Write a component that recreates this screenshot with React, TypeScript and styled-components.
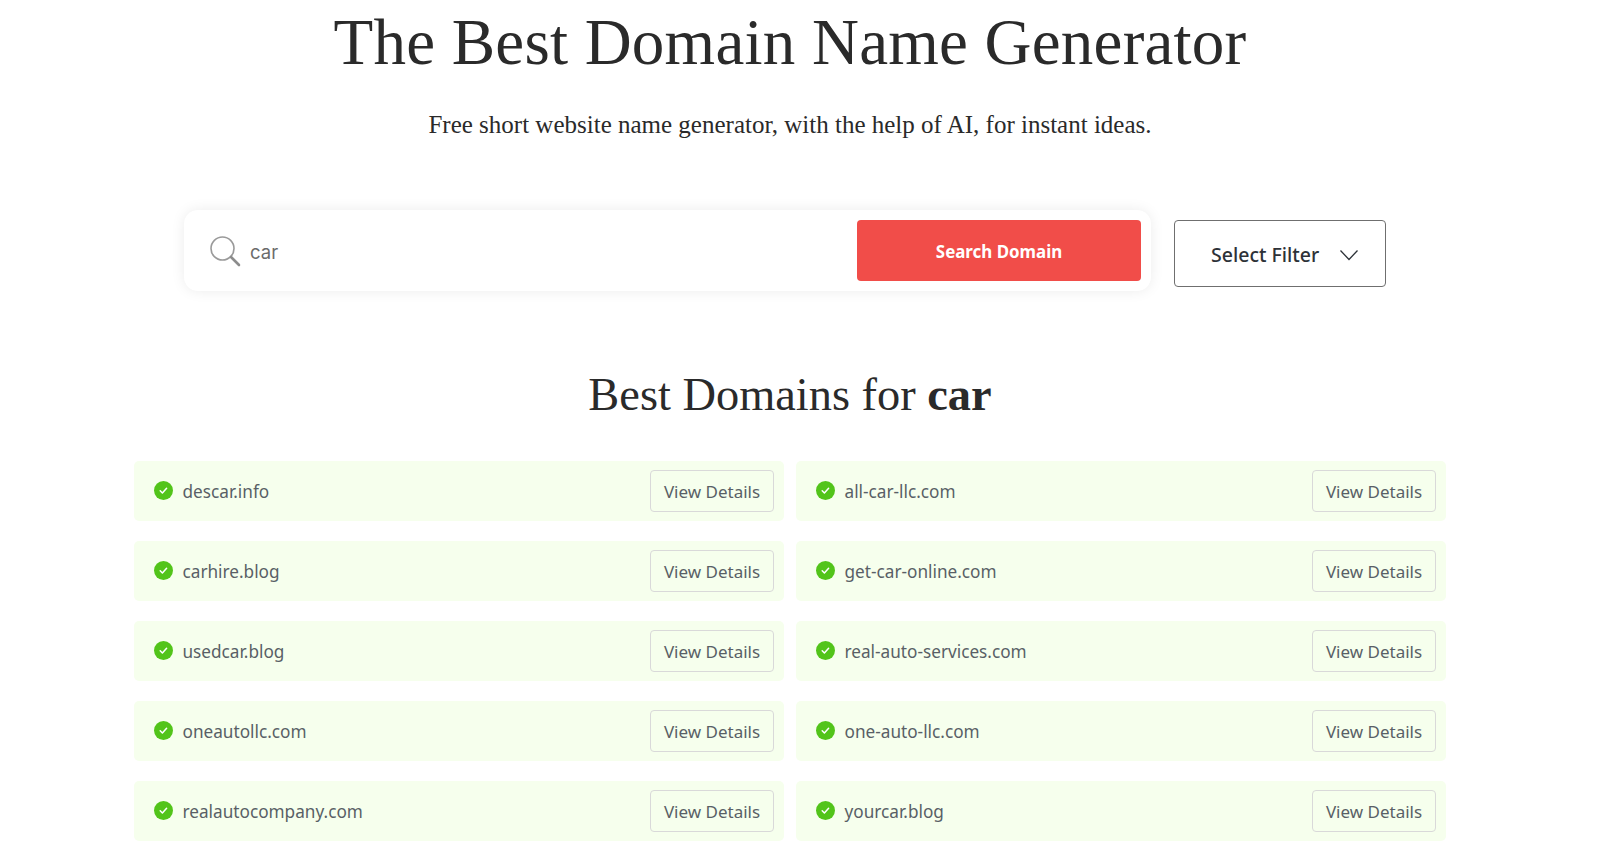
import styled, { createGlobalStyle } from "styled-components";

const domains = [
  "descar.info",
  "all-car-llc.com",
  "carhire.blog",
  "get-car-online.com",
  "usedcar.blog",
  "real-auto-services.com",
  "oneautollc.com",
  "one-auto-llc.com",
  "realautocompany.com",
  "yourcar.blog",
];

const GlobalStyle = createGlobalStyle`
  html, body {
    margin: 0;
    padding: 0;
    background: #fff;
    overflow: hidden;
  }
  * {
    box-sizing: border-box;
  }
`;

const Page = styled.div`
  width: 1580px;
  height: 849px;
  overflow: hidden;
  display: flex;
  flex-direction: column;
  align-items: center;
  padding-top: 5px;
`;

const Title = styled.h1`
  margin: 0;
  font-family: "Liberation Serif", serif;
  font-weight: 400;
  font-size: 65px;
  line-height: 74px;
  letter-spacing: 0.23px;
  color: #2a2a2a;
`;

const Subtitle = styled.p`
  margin: 29px 0 0;
  font-family: "Liberation Serif", serif;
  font-size: 25px;
  line-height: 34px;
  color: #2a2a2a;
`;

const SearchRow = styled.div`
  margin-top: 68px;
  width: 1212px;
  padding-right: 10px;
  display: flex;
  align-items: center;
  gap: 23px;
`;

const SearchCard = styled.div`
  width: 967px;
  height: 81px;
  padding: 10px;
  background: #fff;
  border-radius: 14px;
  box-shadow: 0 0 14px rgba(0, 0, 0, 0.08);
  display: flex;
  align-items: center;
`;

const SearchIcon = styled.svg`
  width: 32px;
  height: 32px;
  margin-left: 15px;
  flex-shrink: 0;
`;

const SearchValue = styled.span`
  margin-left: 9px;
  padding-top: 3px;
  flex: 1;
  font-family: Inter, sans-serif;
  font-size: 18.5px;
  color: #6b6b6b;
`;

const SearchButton = styled.button`
  width: 284px;
  height: 61px;
  padding: 2px 0 0;
  border: none;
  border-radius: 4px;
  background: #f14d49;
  color: #fff;
  font-family: "Noto Sans", sans-serif;
  font-weight: 700;
  font-size: 16.9px;
`;

const FilterButton = styled.button`
  width: 212px;
  height: 67px;
  margin-top: 6px;
  padding: 2px 26px 0 36px;
  display: flex;
  align-items: center;
  justify-content: space-between;
  background: #fff;
  border: 1px solid #6f6f6f;
  border-radius: 4px;
  color: #2d3238;
  font-family: "Noto Sans", sans-serif;
  font-weight: 500;
  font-size: 19.5px;
`;

const FilterChevron = styled.svg`
  width: 20px;
  height: 12px;
  flex-shrink: 0;
`;

const ResultsHeading = styled.h2`
  margin: 76px 0 0;
  font-family: "Liberation Serif", serif;
  font-weight: 400;
  font-size: 46.4px;
  line-height: 56px;
  color: #2a2a2a;

  b {
    font-weight: 700;
  }
`;

const ResultGrid = styled.div`
  margin-top: 38px;
  width: 1312px;
  display: grid;
  grid-template-columns: 650px 650px;
  column-gap: 12px;
  row-gap: 20px;
`;

const ResultRow = styled.div`
  height: 60px;
  padding: 0 10px 0 20px;
  display: flex;
  align-items: center;
  background: #f6ffed;
  border-radius: 5px;
`;

const CheckBadge = styled.span`
  width: 19px;
  height: 19px;
  margin-bottom: 2px;
  border-radius: 50%;
  background: #52c41a;
  display: flex;
  align-items: center;
  justify-content: center;
  flex-shrink: 0;
`;

const DomainName = styled.span`
  margin-left: 9.5px;
  flex: 1;
  font-family: "Noto Sans", sans-serif;
  font-size: 17.2px;
  color: #595f66;
`;

const DetailsButton = styled.button`
  width: 124px;
  height: 42px;
  background: transparent;
  border: 1px solid #d9d9d9;
  border-radius: 4px;
  font-family: "Noto Sans", sans-serif;
  font-size: 17px;
  color: #595f66;
`;

export default function App() {
  return (
    <Page>
      <GlobalStyle />
      <Title>The Best Domain Name Generator</Title>
      <Subtitle>
        Free short website name generator, with the help of AI, for instant
        ideas.
      </Subtitle>
      <SearchRow>
        <SearchCard>
          <SearchIcon viewBox="0 0 32 32" fill="none">
            <circle cx="13.5" cy="13.5" r="11.5" stroke="#9a9a9a" strokeWidth="1.6" />
            <path d="M22 22l8 8" stroke="#8c8c8c" strokeWidth="2.6" strokeLinecap="round" />
          </SearchIcon>
          <SearchValue>car</SearchValue>
          <SearchButton>Search Domain</SearchButton>
        </SearchCard>
        <FilterButton>
          Select Filter
          <FilterChevron viewBox="0 0 20 12" fill="none">
            <path d="M1.5 1.5L10 10.5l8.5-9" stroke="#2d3238" strokeWidth="1.3" />
          </FilterChevron>
        </FilterButton>
      </SearchRow>
      <ResultsHeading>
        Best Domains for <b>car</b>
      </ResultsHeading>
      <ResultGrid>
        {domains.map((name) => (
          <ResultRow key={name}>
            <CheckBadge>
              <svg width="11" height="11" viewBox="0 0 11 11" fill="none">
                <path d="M2.2 5.8l2.2 2.2 4.2-4.8" stroke="#fff" strokeWidth="1.5" strokeLinecap="round" strokeLinejoin="round" />
              </svg>
            </CheckBadge>
            <DomainName>{name}</DomainName>
            <DetailsButton>View Details</DetailsButton>
          </ResultRow>
        ))}
      </ResultGrid>
    </Page>
  );
}
